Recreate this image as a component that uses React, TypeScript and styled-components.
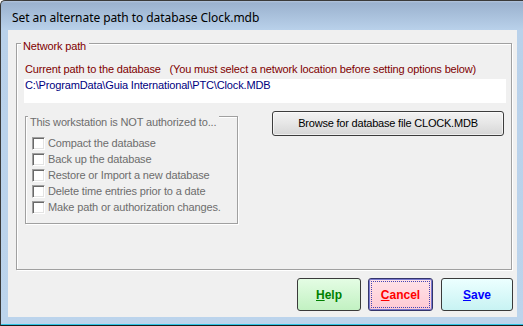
import React from "react";
import styled, { createGlobalStyle } from "styled-components";

const Global = createGlobalStyle`
  html, body { margin: 0; padding: 0; background: #ffffff; }
  body { width: 523px; height: 326px; overflow: hidden; }
  *, *::before, *::after { box-sizing: border-box; }
`;

const Window = styled.div`
  width: 523px;
  height: 326px;
  display: flex;
  flex-direction: column;
  border-top: 1px solid #3a3a3a;
  border-left: 1px solid #3a3a3a;
  border-bottom: 1px solid #1c1c1c;
  border-top-left-radius: 5px;
  background: linear-gradient(#b3c5dc 0px, #9bb2cf 2px, #b9d1ea 29px, #bcd4ec 100%);
  box-shadow: inset 0 -1px 0 #2fc4e4;
  font-family: "Liberation Sans", Arial, sans-serif;
  letter-spacing: -0.15px;
`;

const TitleBar = styled.div`
  height: 29px;
  flex-shrink: 0;
  padding: 9px 0 0 11px;
  font-family: "Noto Sans", "Open Sans", sans-serif;
  font-size: 12px;
  line-height: 16px;
  letter-spacing: -0.07px;
  color: #000;
  white-space: nowrap;
`;

const Client = styled.div`
  height: 287px;
  flex-shrink: 0;
  margin: 0 6px 0 7px;
  background: #f0f0f0;
  padding: 13px 0 0 8px;
  display: flex;
  flex-direction: column;
`;

const Group = styled.div<{ $w: number; $h: number }>`
  position: relative;
  width: ${(p) => p.$w}px;
  height: ${(p) => p.$h}px;
  flex-shrink: 0;
  border: 1px solid #a0a0a0;
  box-shadow: 1px 1px 0 #ffffff, inset 1px 1px 0 #ffffff;
  display: flex;
  flex-direction: column;
`;

const GroupTitle = styled.div<{ $color: string; $top: number; $left: number; $lh: number }>`
  position: absolute;
  top: ${(p) => p.$top}px;
  left: ${(p) => p.$left}px;
  padding: 0 3px 0 2px;
  background: #f0f0f0;
  color: ${(p) => p.$color};
  font-size: 11px;
  line-height: ${(p) => p.$lh}px;
  white-space: nowrap;
`;

const NetworkBody = styled.div`
  padding: 19px 5px 0 7px;
  display: flex;
  flex-direction: column;
`;

const PathLabel = styled.div`
  margin-left: 1px;
  color: #800000;
  font-size: 11px;
  line-height: 13px;
  white-space: pre;
`;

const PathBox = styled.div`
  margin-top: 3px;
  height: 24px;
  background: #ffffff;
  color: #000080;
  font-size: 11px;
  line-height: 12px;
  padding-left: 1px;
  white-space: nowrap;
`;

const Row = styled.div`
  margin-top: 8px;
  display: flex;
  align-items: flex-start;
`;

const AuthWrap = styled.div`
  margin: 5px 0 0 1px;
`;

const AuthBody = styled.div`
  padding: 20px 0 0 6px;
  display: flex;
  flex-direction: column;
`;

const CheckRow = styled.label`
  height: 16px;
  display: flex;
  align-items: flex-start;
  gap: 3px;
  color: #6d6d6d;
  font-size: 11px;
  line-height: 13px;
  white-space: nowrap;
`;

const Check = styled.input.attrs({ type: "checkbox", disabled: true })`
  appearance: none;
  margin: 0;
  width: 13px;
  height: 13px;
  flex-shrink: 0;
  background: #ffffff;
  border-top: 1px solid #a0a0a0;
  border-left: 1px solid #a0a0a0;
  border-right: 1px solid #ffffff;
  border-bottom: 1px solid #ffffff;
  box-shadow: inset 1px 1px 0 #696969, inset -1px -1px 0 #e3e3e3;
`;

const BrowseButton = styled.button`
  margin-left: 34px;
  width: 232px;
  height: 25px;
  padding: 0;
  border: 1px solid #3c3c3c;
  border-radius: 3px;
  background: linear-gradient(#f3f3f3, #e6e6e6 50%, #d6d6d6);
  box-shadow: inset 0 0 0 1px rgba(255, 255, 255, 0.6);
  color: #000;
  font-family: "Liberation Sans", Arial, sans-serif;
  font-size: 11px;
  line-height: 13px;
  letter-spacing: -0.2px;
`;

const ButtonRow = styled.div`
  margin-top: 8px;
  padding-right: 4px;
  display: flex;
  justify-content: flex-end;
`;

const tones = {
  help: { top: "#e4fde4", bottom: "#c2f1c2", text: "#008000", border: "#3a3a3a" },
  cancel: { top: "#ffe3e8", bottom: "#ffc9d3", text: "#ff0000", border: "#34346a" },
  save: { top: "#ecffff", bottom: "#c8f3f3", text: "#0000ff", border: "#3a3a3a" },
};

const ActionButton = styled.button<{ $tone: keyof typeof tones; $w: number; $gap: number; $focus?: boolean }>`
  width: ${(p) => p.$w}px;
  height: 33px;
  margin-left: ${(p) => p.$gap}px;
  padding: 0;
  border: 1px solid ${(p) => tones[p.$tone].border};
  border-radius: 3px;
  background: linear-gradient(${(p) => tones[p.$tone].top}, ${(p) => tones[p.$tone].bottom});
  color: ${(p) => tones[p.$tone].text};
  font-family: "Liberation Sans", Arial, sans-serif;
  font-weight: bold;
  font-size: 12px;
  line-height: 14px;
  ${(p) =>
    p.$focus
      ? `box-shadow: inset 0 0 0 1px #7a7ad0; outline: 1px dotted #4646b4; outline-offset: -4px;`
      : ``}
`;

const items = [
  "Compact the database",
  "Back up the database",
  "Restore or Import a new database",
  "Delete time entries prior to a date",
  "Make path or authorization changes.",
];

export default function App() {
  return (
    <>
      <Global />
      <Window>
        <TitleBar>Set an alternate path to database Clock.mdb</TitleBar>
        <Client>
          <Group $w={496} $h={227}>
            <GroupTitle $color="#800000" $top={-4} $left={4} $lh={13}>
              Network path
            </GroupTitle>
            <NetworkBody>
              <PathLabel>
                {"Current path to the database   (You must select a network location before setting options below)"}
              </PathLabel>
              <PathBox>C:\ProgramData\Guia International\PTC\Clock.MDB</PathBox>
              <Row>
                <AuthWrap>
                  <Group $w={213} $h={108}>
                    <GroupTitle $color="#6d6d6d" $top={-2} $left={2} $lh={15}>
                      This workstation is NOT authorized to...
                    </GroupTitle>
                    <AuthBody>
                      {items.map((t) => (
                        <CheckRow key={t}>
                          <Check />
                          <span>{t}</span>
                        </CheckRow>
                      ))}
                    </AuthBody>
                  </Group>
                </AuthWrap>
                <BrowseButton>Browse for database file CLOCK.MDB</BrowseButton>
              </Row>
            </NetworkBody>
          </Group>
          <ButtonRow>
            <ActionButton $tone="help" $w={64} $gap={0}>
              <u>H</u>elp
            </ActionButton>
            <ActionButton $tone="cancel" $w={65} $gap={7} $focus>
              <u>C</u>ancel
            </ActionButton>
            <ActionButton $tone="save" $w={72} $gap={8}>
              <u>S</u>ave
            </ActionButton>
          </ButtonRow>
        </Client>
      </Window>
    </>
  );
}
